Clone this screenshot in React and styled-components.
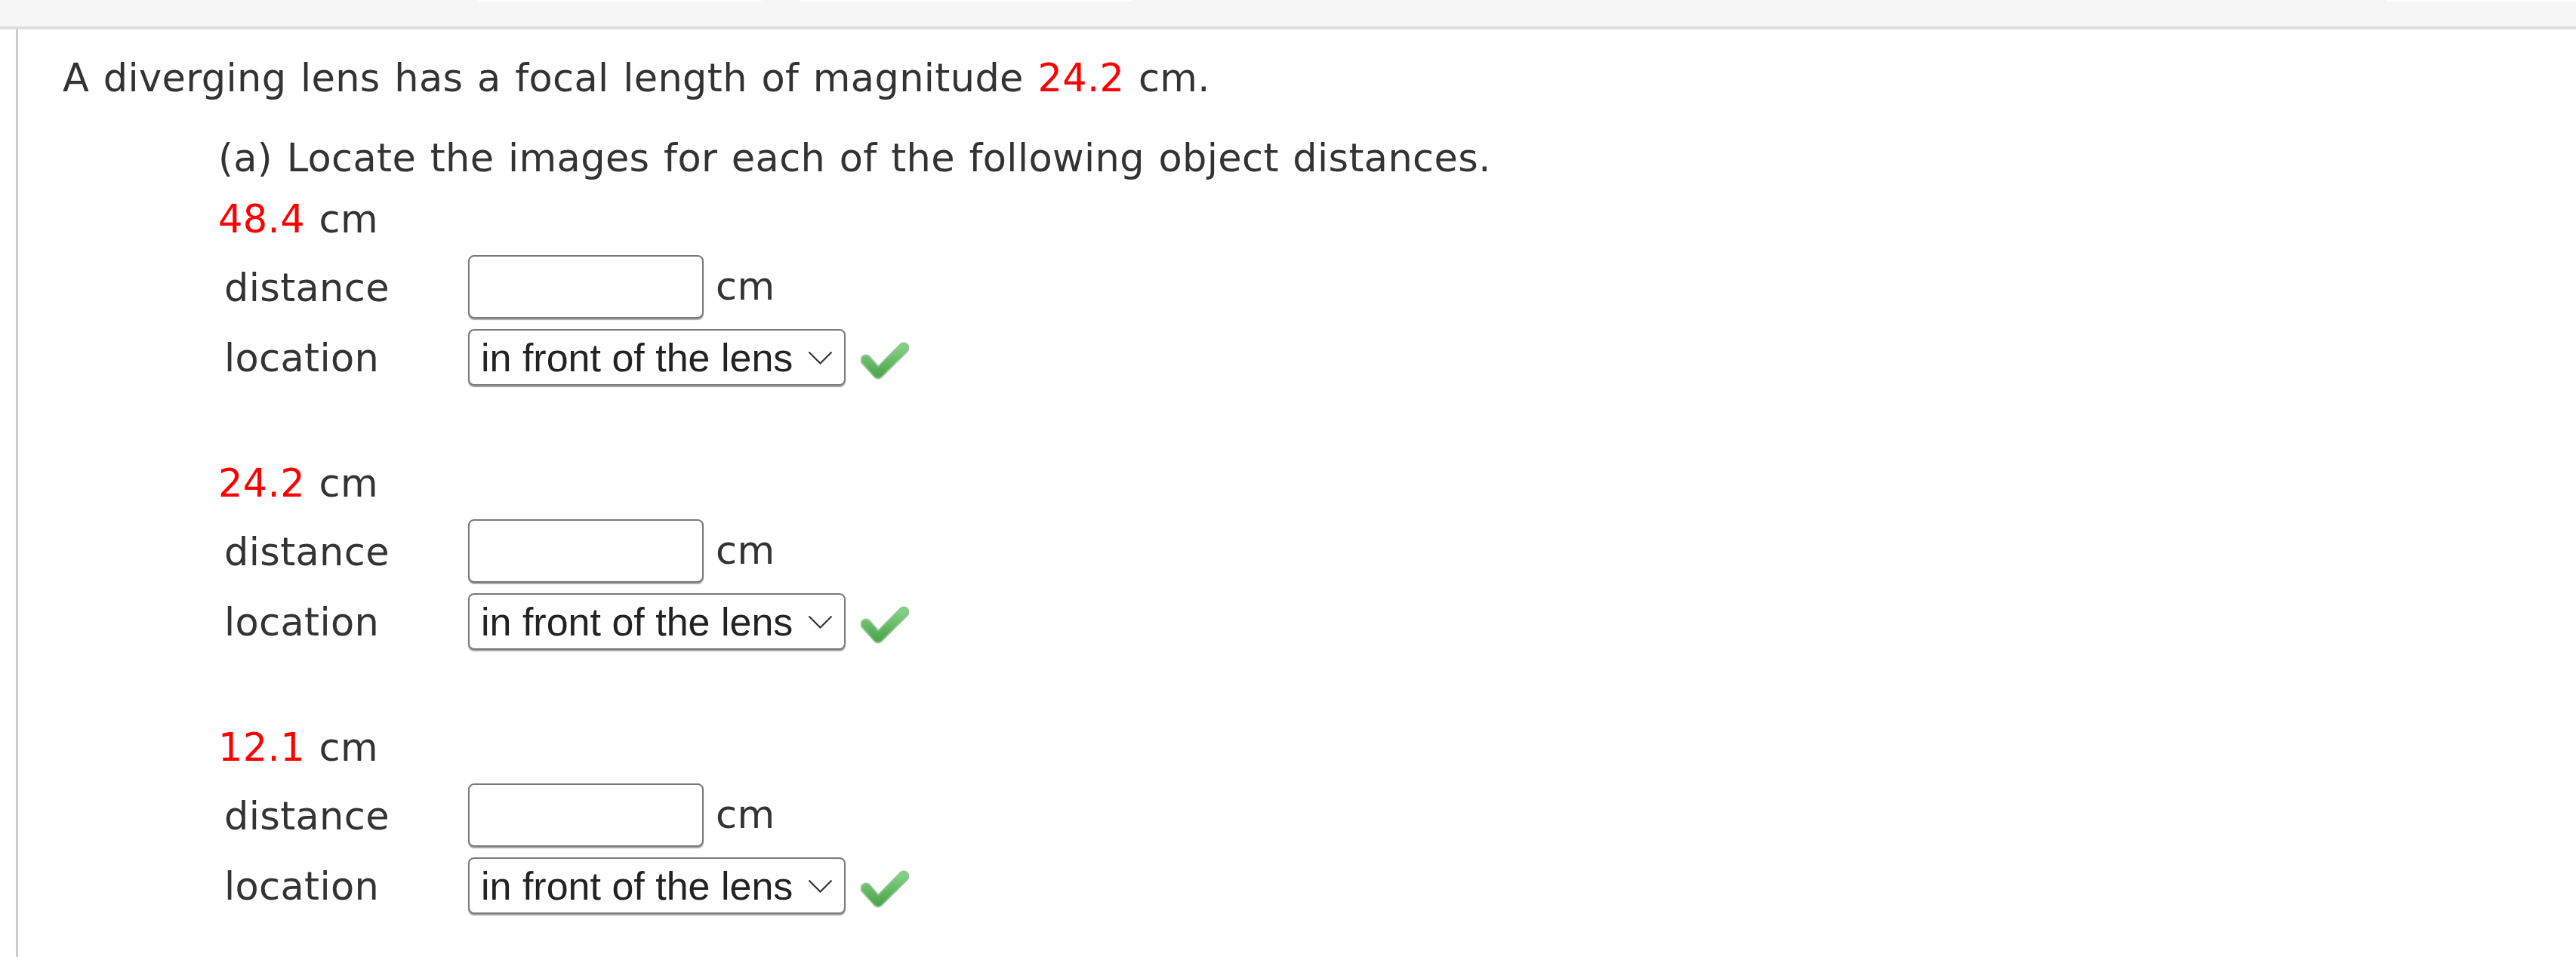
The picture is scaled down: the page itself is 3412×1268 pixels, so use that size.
import React from "react";
import styled, { createGlobalStyle } from "styled-components";

const GlobalStyle = createGlobalStyle`
  html, body {
    margin: 0;
    padding: 0;
    background: #ffffff;
  }
  body {
    font-family: "DejaVu Sans", Verdana, sans-serif;
    color: #333333;
  }
`;

const TopBar = styled.header`
  height: 35px;
  background: #f6f6f6;
  border-bottom: 4px solid #dddddd;
  display: flex;
  align-items: flex-start;
  padding-left: 634px;
  box-sizing: content-box;
`;

const TabEdge = styled.div`
  height: 2px;
  width: ${(p) => p.$w}px;
  margin-right: ${(p) => p.$gap || 0}px;
  margin-left: ${(p) => (p.$push ? "auto" : "0")};
  background: #ffffff;
`;

const Main = styled.main`
  margin-left: 21px;
  border-left: 3px solid #cccccc;
  min-height: calc(100vh - 39px);
  padding: 35px 0 0 59px;
  box-sizing: border-box;
`;

const Text = styled.div`
  font-size: 51px;
  line-height: 60px;
  letter-spacing: 0.35px;
  word-spacing: 2px;
  color: #333333;
  white-space: nowrap;
`;

const Heading = styled(Text)`
  margin: 0 0 46px 0;
`;

const Part = styled.section`
  margin-left: 206px;
`;

const Prompt = styled(Text)`
  margin-bottom: 21px;
`;

const Red = styled.span`
  color: #ff0000;
`;

const Group = styled.div`
  display: flex;
  flex-direction: column;
  padding-bottom: 100px;
`;

const ValueLine = styled(Text)`
  margin-bottom: 17px;
`;

const Row = styled.div`
  display: grid;
  grid-template-columns: 331px auto;
  align-items: center;
  margin-bottom: ${(p) => p.$mb || 0}px;
`;

const Label = styled(Text)`
  padding-left: 8px;
  padding-top: 3px;
`;

const Controls = styled.div`
  display: flex;
  align-items: center;
`;

const NumberInput = styled.input`
  box-sizing: border-box;
  width: 312px;
  height: 84px;
  border: 2px solid #7a7a7a;
  border-radius: 8px;
  box-shadow: 0 1.5px 1px rgba(0, 0, 0, 0.35);
  background: #ffffff;
  font-family: "Liberation Sans", Arial, sans-serif;
  font-size: 51px;
  padding: 0 14px;
  outline: none;
`;

const Unit = styled(Text)`
  margin-left: 16px;
`;

const SelectWrap = styled.div`
  position: relative;
  width: 500px;
  height: 75px;
`;

const Select = styled.select`
  appearance: none;
  -webkit-appearance: none;
  box-sizing: border-box;
  width: 100%;
  height: 100%;
  border: 2px solid #7a7a7a;
  border-radius: 8px;
  box-shadow: 0 1.5px 1px rgba(0, 0, 0, 0.35);
  background: #ffffff;
  color: #222222;
  font-family: "Liberation Sans", Arial, Helvetica, sans-serif;
  font-size: 52px;
  padding: 0 0 0 15px;
  outline: none;
`;

const Chevron = styled.svg`
  position: absolute;
  right: 17px;
  top: 29px;
  width: 33px;
  height: 18px;
  pointer-events: none;
`;

const Check = styled.svg`
  margin-left: 20px;
  width: 64px;
  height: 50px;
  margin-top: 8px;
`;

const CheckIcon = () => (
  <Check viewBox="0 0 64 50">
    <defs>
      <linearGradient id="chk" x1="0" y1="0" x2="0" y2="1">
        <stop offset="0" stopColor="#7fd07f" />
        <stop offset="1" stopColor="#4fa84f" />
      </linearGradient>
    </defs>
    <polyline
      points="7,24 23,42 57,8"
      fill="none"
      stroke="#3f8f3f"
      strokeOpacity="0.55"
      strokeWidth="15"
      strokeLinejoin="round"
      strokeLinecap="round"
    />
    <polyline
      points="7,24 23,42 57,8"
      fill="none"
      stroke="url(#chk)"
      strokeWidth="11"
      strokeLinejoin="round"
      strokeLinecap="round"
    />
  </Check>
);

const ChevronIcon = () => (
  <Chevron viewBox="0 0 33 18">
    <polyline
      points="1.5,1.5 16.5,16.5 31.5,1.5"
      fill="none"
      stroke="#333333"
      strokeWidth="2.2"
    />
  </Chevron>
);

const distances = ["48.4", "24.2", "12.1"];

const LocationSelect = () => (
  <SelectWrap>
    <Select defaultValue="front">
      <option value="front">in front of the lens</option>
      <option value="behind">behind the lens</option>
    </Select>
    <ChevronIcon />
  </SelectWrap>
);

export default function App() {
  return (
    <>
      <GlobalStyle />
      <TopBar>
        <TabEdge $w={374} $gap={52} />
        <TabEdge $w={440} />
        <TabEdge $w={252} $push />
      </TopBar>
      <Main>
        <Heading>
          A diverging lens has a focal length of magnitude <Red>24.2</Red> cm.
        </Heading>
        <Part>
          <Prompt>(a) Locate the images for each of the following object distances.</Prompt>
          {distances.map((d) => (
            <Group key={d}>
              <ValueLine>
                <Red>{d}</Red> cm
              </ValueLine>
              <Row $mb={14}>
                <Label>distance</Label>
                <Controls>
                  <NumberInput type="text" />
                  <Unit>cm</Unit>
                </Controls>
              </Row>
              <Row>
                <Label>location</Label>
                <Controls>
                  <LocationSelect />
                  <CheckIcon />
                </Controls>
              </Row>
            </Group>
          ))}
        </Part>
      </Main>
    </>
  );
}
